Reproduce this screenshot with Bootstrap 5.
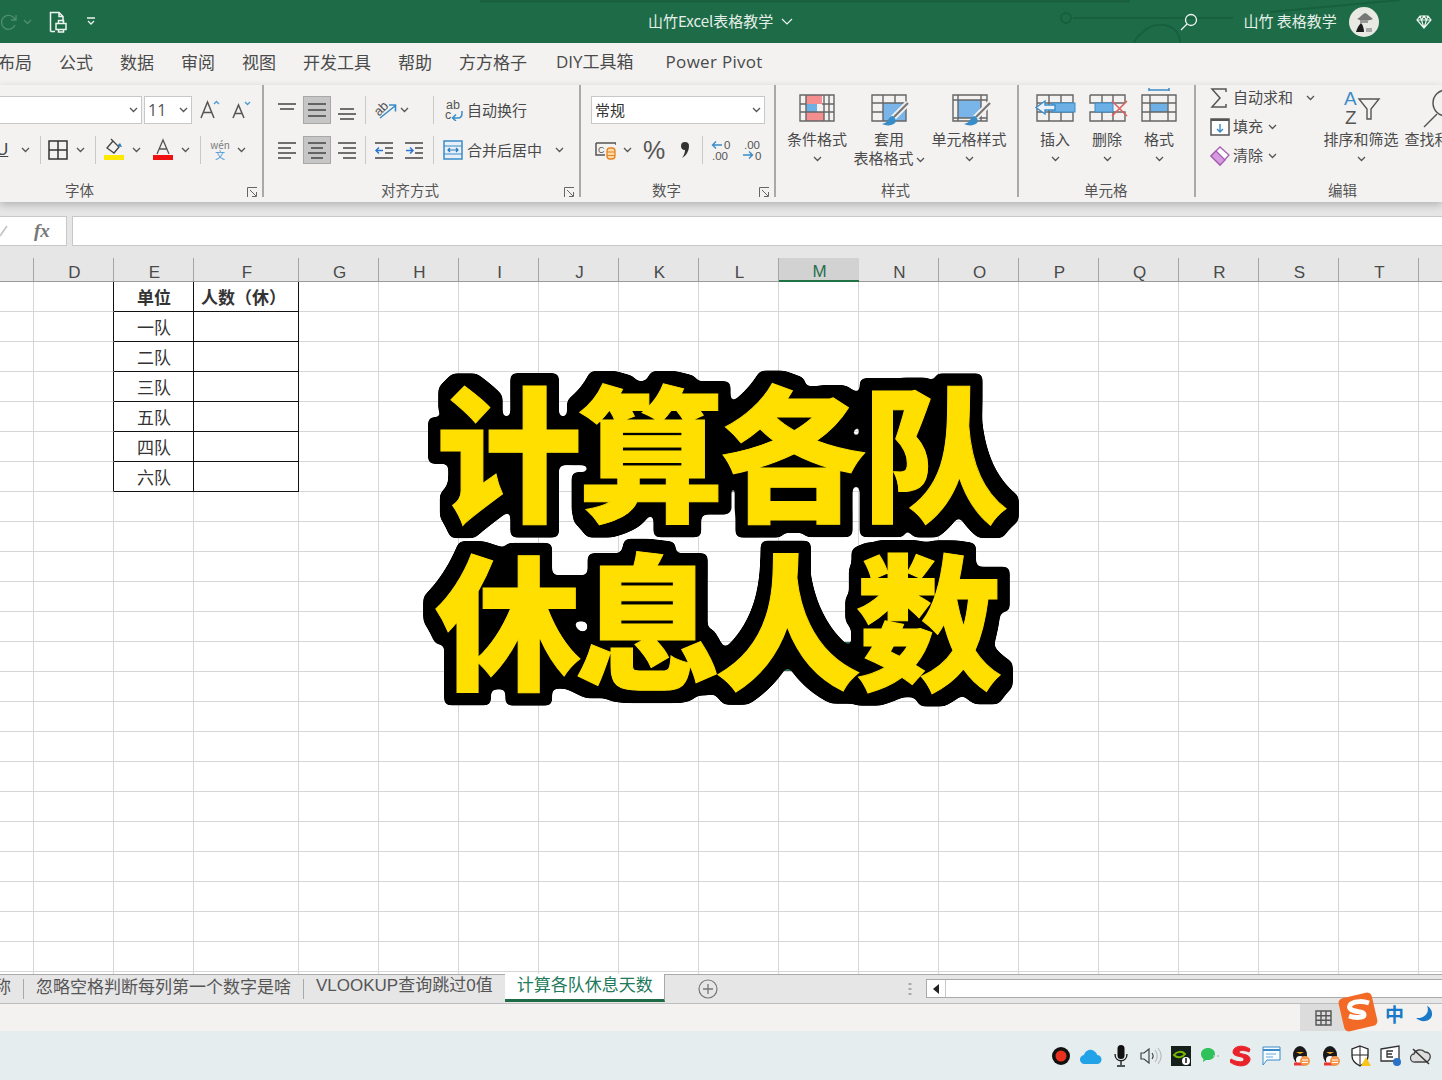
<!DOCTYPE html>
<html lang="zh-CN">
<head>
<meta charset="utf-8">
<title>山竹Excel表格教学</title>
<link href="https://cdn.jsdelivr.net/npm/bootstrap@5.3.0/dist/css/bootstrap.min.css" rel="stylesheet">
<style>
html,body{margin:0;height:100%;overflow:hidden;background:#f3f2f1}
body{font-family:"Noto Sans CJK SC","Liberation Sans",sans-serif;color:#444}
.xl-app{width:1442px;height:1080px;overflow:hidden;position:relative}
.ti-bar{height:43px;background:#1e6b47;color:#e4efe9;font-size:15px;position:relative;flex:none}
.ti-deco{position:absolute;left:0;top:0;pointer-events:none}
.ti-bar>*:not(.ti-deco){position:relative}
.tab-bar{height:42px;background:#f3f2f1;font-size:17px;gap:27px;color:#4a4a4a;flex:none;margin-left:-2px;padding-bottom:5px}
.tab-latin{font-family:"Open Sans","Noto Sans CJK SC",sans-serif;font-size:17px}
.tab-pp{letter-spacing:.3px}
.rb-bar{height:117px;background:#f3f2f1;box-shadow:0 3px 8px rgba(0,0,0,.22);position:relative;z-index:2;flex:none;font-size:15px;color:#4a4a4a}
.rb-grp{height:112px;border-right:2px solid #a9a9a9;flex:none;display:flex;flex-direction:column}
.g-font{width:264px}.g-alig{width:317px;padding-left:9px}.g-num{width:195px;padding-left:10px}.g-sty{width:243px;padding-left:11px}.g-cel{width:177px;padding-left:10px}.g-edt{width:300px;border-right:0}
.rb-row{display:flex;align-items:center;height:28px;flex:none;margin-top:11px}
.rb-row+.rb-row{margin-top:12px}
.rb-cap{margin-top:auto;height:20px;display:flex;align-items:center;line-height:20px;font-size:14.5px;color:#555;margin-bottom:-3px}
.rb-launch{margin-left:auto;margin-right:4px;margin-top:4px}
.rb-sep{width:1px;height:28px;background:#c9c9c9;flex:none}
.rb-in{height:28px;background:#fff;border:1px solid #c8c8c8;display:flex;align-items:center;justify-content:space-between;padding:0 3px 0 3px;flex:none}
.in-font{width:142px;border-left:0;justify-content:flex-end}
.in-size{width:48px;margin-left:2px;font-size:16px;color:#555;font-family:"Open Sans",sans-serif}
.in-num{width:174px;color:#333}
.rb-btn{width:28px;height:28px;display:flex;align-items:center;justify-content:center;flex:none;border:1px solid transparent}
.rb-btn+.rb-btn{margin-left:2px}
.rb-on{background:#c6c6c6;border-color:#a8a8a8}
.chv{width:14px;flex:none;display:flex;justify-content:center}
.u-mark{width:22px;font-family:"Liberation Sans",sans-serif;font-size:17px;text-decoration:underline;margin-left:-4px;color:#444;flex:none}
.wen-stack{width:22px;display:flex;flex-direction:column;align-items:center;line-height:10px;flex:none;color:#7b7b7b;font-size:10px}
.wen-stack b{font-weight:400;color:#4a9ad4;font-size:10px}
.big-col{display:flex;flex-direction:column;align-items:center;flex:none;line-height:19px;padding-top:9px;height:89px}
.big-col svg.mainic{margin-bottom:7px;flex:none;overflow:visible}
.big-col span{display:block;white-space:nowrap}
.bc60{width:60px}.bc74{width:74px;margin-left:5px}.bc76{width:76px;margin-left:5px}.bc52{width:52px}
.mag-ic{align-self:flex-start;margin-left:20px}
.edt-list{width:108px;margin-left:14px;margin-top:-2px;flex:none}
.edt-row{height:29px;display:flex;align-items:center}
.f-bar{height:45px;background:#e6e6e6;flex:none;padding-top:14px;gap:5px}
.f-box{height:30px;background:#fff;border:1px solid #c8c8c8;border-left:0}
.f-fx{width:67px;font-family:"Liberation Serif",serif;font-style:italic;font-weight:700;font-size:19px;color:#777;padding-left:0;line-height:26px;flex:none;display:flex;align-items:center}
.fx-lbl{margin-left:26px}
.f-in{flex:1;border-left:1px solid #c8c8c8;border-right:0}
.sh-wrap{height:727px;overflow:hidden;background:#fff;flex:none}
.xl-grid.table{width:1499px;table-layout:fixed;border-collapse:separate;border-spacing:0;margin:0}
.xl-grid.table>:not(caption)>*>*{padding:0 0 0 1px;border:0;border-right:1px solid #d6d6d6;border-bottom:1px solid #d6d6d6;height:30px;text-align:center;font-size:17px;font-weight:400;color:#333;background:transparent;box-shadow:none;line-height:29px}
.xl-grid.table>thead>tr>th{height:35px;background:linear-gradient(#a5a5a5,#a5a5a5) right bottom/1px 23px no-repeat #e6e6e6;border-right:0;border-bottom:1px solid #9a9a9a;font-family:"Liberation Sans",sans-serif;font-size:17px;line-height:16px;vertical-align:bottom;padding:0 0 0 1px;color:#4a4a4a}
.xl-grid.table>thead>tr>th.th-on{background:linear-gradient(#d2d2d2,#d2d2d2) left bottom/100% 22px no-repeat #e6e6e6;border-bottom:2px solid #217346;color:#2a6e52}
.cw-a{width:34px}.cw-n{width:80px}.cw-f{width:105px}
.xl-grid.table>tbody>tr>td.ink-r{border-right-color:#111}
.xl-grid.table>tbody>tr>td.ink-b{border-bottom-color:#111}
.xl-grid.table>tbody>tr>td.ink-hd{font-weight:700}
.xl-grid.table>tbody>tr>td.ink-lf{text-align:left;padding-left:7px}
.xl-grid.table>tbody>tr>td.cell-sel{box-shadow:inset 0 0 0 2px #2c6e58}
.s-bar{height:30px;background:#e6e6e6;border-top:1px solid #a9a9a9;border-bottom:1px solid #bdbdbd;font-size:17px;flex:none;color:#555;white-space:nowrap;line-height:24px}
.s-lbl{padding-bottom:6px}
.s-cut{margin-left:-6px}
.s-latin{font-family:"Liberation Sans","Noto Sans CJK SC",sans-serif}
.s-sep{width:1px;height:20px;background:#a9a9a9;flex:none;margin:0 12px;align-self:flex-start;margin-top:4px}
.s-tab{height:28px;background:#fff;color:#217a5a;padding:0 12px;border-bottom:3px solid #1e6b47;margin-top:-1px;margin-left:12px;border-right:1px solid #a9a9a9;line-height:19px;width:160px;align-self:flex-start}
.s-plus{margin-left:33px}.s-dots{margin-left:190px}
.s-scr{margin-left:14px;width:540px;height:19px;background:#fff;border:1px solid #a9a9a9;display:flex;flex:none;margin-top:-1px}
.s-scr i{display:flex;align-items:center;justify-content:center;width:19px;border-right:1px solid #c8c8c8}
.st-bar{height:27px;background:#f3f2f1;flex:none;position:relative;justify-content:flex-end}
.st-grid{width:50px;height:27px;background:#dcdcdc;margin-right:92px;padding-left:15px;display:flex;align-items:center}
.ime-pop{position:absolute;left:1337px;top:-12px;height:40px;display:flex;align-items:center;color:#1a7ac8;font-weight:700;font-size:19px}
.ime-han{margin-left:6px;margin-right:11px;line-height:40px;margin-top:3px}
.ime-moon{margin-top:3px}
.tk-bar{height:50px;background:#e6edef;flex:none;padding-left:1046px}
.tk-ic{width:30px;display:flex;justify-content:center;align-items:center;flex:none}
.cap-a{margin-left:65px}.cap-b{margin-left:108px}.cap-c{margin-left:61px}.cap-d{margin-left:94px}.cap-e{margin-left:55px}.cap-f{margin-left:132px}
.pct-txt{font-family:"Liberation Sans",sans-serif;font-size:25px;color:#555;line-height:28px;flex:none;width:21px;text-align:center}
.ml2{margin-left:2px}.ml3{margin-left:3px}.ml4{margin-left:4px}.ml5{margin-left:5px}.ml7{margin-left:7px}.ml8{margin-left:8px}.ml9{margin-left:9px}.ml10{margin-left:10px}.ml12{margin-left:12px}.ml16{margin-left:16px}.ml22{margin-left:22px}
.ti-m1b{margin-left:17px}.ti-m1c{margin-left:17px}.ti-m2{margin-left:552px}.ti-m3{margin-left:387px}.ti-m4{margin-left:45px}.ti-m5{margin-left:12px}.ti-m6{margin-left:37px}
.xl-over{position:absolute;left:400px;top:350px;z-index:5;pointer-events:none}
.xl-over text{font-family:"Noto Sans CJK SC",sans-serif;font-weight:900;font-size:146px;fill:#ffdf00;stroke:#ffdf00;stroke-width:1px;filter:url(#ink-edge)}
svg{display:block;flex:none}
</style>
</head>
<body>
<svg width="0" height="0" class="position-absolute">
<defs>
<symbol id="chev" viewBox="0 0 9 6"><path d="M1 1l3.500 3.500L8 1" fill="none" stroke="#555" stroke-width="1.300"/></symbol>
<symbol id="launch" viewBox="0 0 11 11"><path d="M.5 10V.5H10M3 3l6 6M5 9.500h4.500V5" fill="none" stroke="#666"/></symbol>
<g id="brush"><path d="M37 9L22 24" stroke="#f3f2f1" stroke-width="6"/><path d="M37 9L23 23" stroke="#777" stroke-width="2.200"/><path d="M22 22c-2 0-4 2-5 4-1 2-3 3-6 4 4 2 10 2 13-1 2-2 0-6-2-7z" fill="#3a8cc8"/></g>
<filter id="ink-edge" x="-10%" y="-20%" width="120%" height="140%" color-interpolation-filters="sRGB">
 <feMorphology in="SourceAlpha" operator="dilate" radius="12" result="fat"/>
 <feGaussianBlur in="fat" stdDeviation="3" result="soft"/>
 <feComponentTransfer in="soft" result="edge"><feFuncA type="linear" slope="12" intercept="-5"/></feComponentTransfer>
 <feFlood flood-color="#000"/>
 <feComposite in2="edge" operator="in" result="ink"/>
 <feMerge><feMergeNode in="ink"/><feMergeNode in="SourceGraphic"/></feMerge>
</filter>
</defs>
</svg>
<div class="xl-app d-flex flex-column">

<!-- title bar -->
<div class="ti-bar d-flex align-items-center">
<svg class="ti-deco" width="1442" height="43"><path d="M480 1h650" stroke="#185c3c" stroke-width="3" opacity=".7"/><path d="M1073 18h160M1270 12l130-12M1180 43c0-18-22-24-36-12s-8 12-8 12" stroke="#17603d" stroke-width="2" fill="none"/><circle cx="1066" cy="18" r="5" fill="none" stroke="#17603d" stroke-width="2"/></svg>
<svg width="18" height="18" viewBox="0 0 18 18"><path d="M15 12a7 7 0 1 1-2-8l3 3M16 2v5h-5" fill="none" stroke="#4d8f70" stroke-width="1.300"/></svg>
<svg class="ml5" width="9" height="6" viewBox="0 0 9 6"><path d="M1 1l3.500 3.500L8 1" fill="none" stroke="#4d8f70" stroke-width="1.300"/></svg>
<svg class="ti-m1b" width="20" height="22" viewBox="0 0 20 22"><path d="M1.500 20.500V1.500H10l4 4v5M10 1.500v4h4M6 20.500H1.500" fill="none" stroke="#eef5f1" stroke-width="1.500"/><path d="M7 12.500h10v6H7zM9.500 12.500v-3h5v3M9.500 18.500v2.500h5v-2.500" fill="none" stroke="#eef5f1" stroke-width="1.500"/></svg>
<svg class="ti-m1c" width="10" height="10" viewBox="0 0 10 10"><path d="M1 1h8M2 4l3 3 3-3" fill="none" stroke="#eef5f1" stroke-width="1.300"/></svg>
<span class="ti-m2 text-nowrap">山竹Excel表格教学</span>
<svg class="ml8" width="12" height="7" viewBox="0 0 12 7"><path d="M1 1l5 5 5-5" fill="none" stroke="#eef5f1" stroke-width="1.200"/></svg>
<svg class="ti-m3" width="18" height="18" viewBox="0 0 18 18"><circle cx="11" cy="7" r="5.500" fill="none" stroke="#eef5f1" stroke-width="1.300"/><path d="M7 11l-6 6" stroke="#eef5f1" stroke-width="1.300"/></svg>
<span class="ti-m4 text-nowrap">山竹 表格教学</span>
<svg class="ti-m5" width="30" height="30" viewBox="0 0 30 30"><circle cx="15" cy="15" r="15" fill="#e9e9e4"/><path d="M8 12c3-1 5-5 8-6 3 1 5 4 8 6-5 2-11 2-16 0z" fill="#767676"/><path d="M11 13h8v3h-8z" fill="#9a9a9a"/><path d="M7 25c1-4 3-7 5-9 2 2 3 6 3 9z" fill="#1c1c1c"/><path d="M17 21h6v4h-6z" fill="#a8a8a8"/></svg>
<svg class="ti-m6" width="16" height="14" viewBox="0 0 16 14"><path d="M4 1h8l3 4-7 8-7-8zM1 5h14M5.500 5L8 13l2.500-8M4 1l1.500 4L8 1l2.500 4L12 1" fill="none" stroke="#eef5f1" stroke-width="1.200"/></svg>
</div>

<!-- ribbon tabs -->
<div class="tab-bar d-flex align-items-center text-nowrap">
<span>布局</span><span>公式</span><span>数据</span><span>审阅</span><span>视图</span><span>开发工具</span><span>帮助</span><span>方方格子</span><span class="tab-latin ml2">DIY工具箱</span><span class="tab-latin tab-pp ml5">Power Pivot</span>
</div>

<!-- ribbon -->
<div class="rb-bar d-flex overflow-hidden">
 <div class="rb-grp g-font">
  <div class="rb-row">
   <div class="rb-in in-font"><svg width="9" height="6"><use href="#chev"/></svg></div>
   <div class="rb-in in-size">11<svg width="9" height="6"><use href="#chev"/></svg></div>
   <svg class="ml8" width="20" height="22" viewBox="0 0 20 22"><path d="M1 19L7.500 3 14 19M3.500 13.500h8" fill="none" stroke="#555" stroke-width="1.500"/><path d="M14 5l2.500-2.500L19 5" fill="none" stroke="#4a9ad4" stroke-width="1.300"/></svg>
   <svg class="ml12" width="20" height="22" viewBox="0 0 20 22"><path d="M1 19L6.500 6 12 19M3 14.500h7" fill="none" stroke="#555" stroke-width="1.500"/><path d="M13 3l2.500 2.500L18 3" fill="none" stroke="#4a9ad4" stroke-width="1.300"/></svg>
  </div>
  <div class="rb-row">
   <span class="u-mark">U</span><span class="chv"><svg width="9" height="6"><use href="#chev"/></svg></span>
   <div class="rb-sep ml8"></div>
   <svg class="ml7" width="20" height="20" viewBox="0 0 20 20"><path d="M1 1h18v18H1zM10 1v18M1 10h18" fill="none" stroke="#333" stroke-width="1.500"/></svg>
   <span class="chv ml5"><svg width="9" height="6"><use href="#chev"/></svg></span>
   <div class="rb-sep ml8"></div>
   <svg class="ml8" width="22" height="24" viewBox="0 0 22 24"><path d="M3 10l6-7 6 6-5 6zM7 1l4 4" fill="none" stroke="#444" stroke-width="1.300"/><path d="M13 8l3-3 2 4z" fill="#2a78b8"/><rect x="0" y="17" width="20" height="5" fill="#ffe800"/></svg>
   <span class="chv ml3"><svg width="9" height="6"><use href="#chev"/></svg></span>
   <svg class="ml10" width="22" height="24" viewBox="0 0 22 24"><path d="M4 16L10 2l6 14M6 11h8" fill="none" stroke="#555" stroke-width="1.300"/><rect x="0" y="17" width="20" height="5" fill="#f01010"/></svg>
   <span class="chv ml3"><svg width="9" height="6"><use href="#chev"/></svg></span>
   <div class="rb-sep ml8"></div>
   <div class="wen-stack ml8">wén<b>文</b></div>
   <span class="chv ml3"><svg width="9" height="6"><use href="#chev"/></svg></span>
  </div>
  <div class="rb-cap"><span class="cap-a">字体</span><svg class="rb-launch" width="11" height="11"><use href="#launch"/></svg></div>
 </div>

 <div class="rb-grp g-alig">
  <div class="rb-row">
   <div class="rb-btn"><svg width="20" height="20" viewBox="0 0 20 20"><path d="M1 4h18M3 9h14" stroke="#444" stroke-width="1.300"/></svg></div>
   <div class="rb-btn rb-on"><svg width="20" height="16" viewBox="0 0 20 16"><path d="M1 2h18M1 8h18M1 14h18" stroke="#444" stroke-width="1.300"/></svg></div>
   <div class="rb-btn"><svg width="20" height="20" viewBox="0 0 20 20"><path d="M3 9h14M1 14h18M3 19h14" stroke="#444" stroke-width="1.300"/></svg></div>
   <div class="rb-sep ml4"></div>
   <svg class="ml8" width="23" height="22" viewBox="0 0 23 22"><path d="M6 19L21 7M15 6h6.500v6.500" fill="none" stroke="#3a8cc8" stroke-width="1.600"/><text x="0" y="14" font-size="13" fill="#555" font-family="Liberation Sans" transform="rotate(-45 7 10)">ab</text></svg>
   <span class="chv"><svg width="9" height="6"><use href="#chev"/></svg></span>
   <div class="rb-sep ml22"></div>
   <svg class="ml10" width="20" height="22" viewBox="0 0 20 22"><text x="2" y="10" font-size="12.500" fill="#555" font-family="Liberation Sans">ab</text><text x="1" y="20" font-size="12.500" fill="#555" font-family="Liberation Sans">c</text><path d="M18 12v2q0 5-4 5H9M12 15.500L8.500 19l3.500 3" fill="none" stroke="#3a8cc8" stroke-width="1.500"/></svg>
   <span class="ml3 text-nowrap">自动换行</span>
  </div>
  <div class="rb-row">
   <div class="rb-btn"><svg width="20" height="18" viewBox="0 0 20 18"><path d="M1 2h18M1 7h13M1 12h18M1 17h13" stroke="#444" stroke-width="1.300"/></svg></div>
   <div class="rb-btn rb-on"><svg width="20" height="18" viewBox="0 0 20 18"><path d="M1 2h18M4 7h12M1 12h18M4 17h12" stroke="#444" stroke-width="1.300"/></svg></div>
   <div class="rb-btn"><svg width="20" height="18" viewBox="0 0 20 18"><path d="M1 2h18M6 7h13M1 12h18M6 17h13" stroke="#444" stroke-width="1.300"/></svg></div>
   <div class="rb-sep ml4"></div>
   <svg class="ml8" width="20" height="18" viewBox="0 0 20 18"><path d="M1 2h18M11 7h8M11 12h8M1 17h18" stroke="#444" stroke-width="1.300"/><path d="M9 9.500H2M5 6.500l-3 3 3 3" fill="none" stroke="#2a78d0" stroke-width="1.500"/></svg>
   <svg class="ml10" width="20" height="18" viewBox="0 0 20 18"><path d="M1 2h18M11 7h8M11 12h8M1 17h18" stroke="#444" stroke-width="1.300"/><path d="M2 9.500h7M6 6.500l3 3-3 3" fill="none" stroke="#2a78d0" stroke-width="1.500"/></svg>
   <div class="rb-sep ml9"></div>
   <svg class="ml9" width="20" height="20" viewBox="0 0 20 20"><path d="M1 1h18v18H1z" fill="#e7f0f8" stroke="#3a8cc8" stroke-width="1.500"/><path d="M1 6h18M1 14h18" stroke="#3a8cc8"/><path d="M5 10h10M7 8l-2 2 2 2M13 8l2 2-2 2" fill="none" stroke="#2a78b8" stroke-width="1.200"/></svg>
   <span class="ml4 text-nowrap">合并后居中</span>
   <span class="chv ml10"><svg width="9" height="6"><use href="#chev"/></svg></span>
  </div>
  <div class="rb-cap"><span class="cap-b">对齐方式</span><svg class="rb-launch" width="11" height="11"><use href="#launch"/></svg></div>
 </div>

 <div class="rb-grp g-num">
  <div class="rb-row"><div class="rb-in in-num">常规<svg width="9" height="6"><use href="#chev"/></svg></div></div>
  <div class="rb-row">
   <svg class="ml4" width="21" height="20" viewBox="0 0 21 20"><path d="M1 3h20v2M1 3v12h9" fill="none" stroke="#555" stroke-width="1.500"/><text x="3" y="13" font-size="9" fill="#555" font-family="Liberation Sans">C</text><rect x="12" y="8" width="8" height="11" rx="3" fill="#fbdca8" stroke="#e8821e" stroke-width="1.300"/><path d="M12 12h8M12 15.500h8" stroke="#e8821e"/></svg>
   <span class="chv ml4"><svg width="9" height="6"><use href="#chev"/></svg></span>
   <span class="pct-txt ml9">%</span>
   <svg class="ml16" width="10" height="18" viewBox="0 0 10 18"><path d="M1 5a4 4 0 1 1 8 0c0 5-3 10-7 12 2-3 3-5 3-8-3 0-4-2-4-4z" fill="#333"/></svg>
   <div class="rb-sep ml12"></div>
   <svg class="ml8" width="21" height="22" viewBox="0 0 21 22"><path d="M11 6H2M5 2.500L1.500 6 5 9.500" fill="none" stroke="#3a8cc8" stroke-width="1.400"/><text x="13" y="10" font-size="11.500" fill="#555" font-family="Liberation Sans">0</text><text x="1" y="21" font-size="11.500" fill="#555" font-family="Liberation Sans">.00</text></svg>
   <svg class="ml10" width="21" height="22" viewBox="0 0 21 22"><text x="2" y="10" font-size="11.500" fill="#555" font-family="Liberation Sans">.00</text><path d="M1 16h9M7 12.500l3.500 3.500L7 19.500" fill="none" stroke="#3a8cc8" stroke-width="1.400"/><text x="13" y="21" font-size="11.500" fill="#555" font-family="Liberation Sans">0</text></svg>
  </div>
  <div class="rb-cap"><span class="cap-c">数字</span><svg class="rb-launch" width="11" height="11"><use href="#launch"/></svg></div>
 </div>

 <div class="rb-grp g-sty">
  <div class="d-flex">
   <div class="big-col bc60">
    <svg class="mainic" width="36" height="28" viewBox="0 0 36 28"><rect x="7" y="1" width="16" height="9" fill="#f58f8f"/><rect x="7" y="10" width="11" height="8" fill="#6cb0e6"/><rect x="7" y="18" width="18" height="9" fill="#f58f8f"/><path d="M1 1h34v26H1zM1 10h6M23 10h12M1 18h34M7 1v26M25 1v26M30 1v26" fill="none" stroke="#666" stroke-width="1.400"/></svg>
    <span>条件格式</span><svg width="9" height="6" class="mt-2"><use href="#chev"/></svg>
   </div>
   <div class="big-col bc74">
    <svg class="mainic" width="36" height="28" viewBox="0 0 36 28"><rect x="12" y="9" width="23" height="18" fill="#7ab5ea"/><path d="M1 1h34v26H1zM1 9h34M1 18h11M12 1v26M24 1v8" fill="none" stroke="#666" stroke-width="1.400"/><use href="#brush"/></svg>
    <span class="text-center">套用<br>表格格式<svg width="9" height="6" class="d-inline ml2"><use href="#chev"/></svg></span>
   </div>
   <div class="big-col bc76">
    <svg class="mainic" width="36" height="28" viewBox="0 0 36 28"><rect x="7" y="6" width="23" height="18" fill="#7ab5ea"/><path d="M2 1h34v26H2zM2 6h34M2 24h34M7 1v26M30 1v26" fill="none" stroke="#666" stroke-width="1.400"/><use href="#brush" x="2"/></svg>
    <span>单元格样式</span><svg width="9" height="6" class="mt-2"><use href="#chev"/></svg>
   </div>
  </div>
  <div class="rb-cap"><span class="cap-d">样式</span></div>
 </div>

 <div class="rb-grp g-cel">
  <div class="d-flex">
   <div class="big-col bc52">
    <svg class="mainic" width="40" height="28" viewBox="0 0 40 28"><path d="M2 1h36v26H2zM14 1v26M26 1v26M2 9h36M2 18h36" fill="none" stroke="#666" stroke-width="1.400"/><rect x="17" y="9" width="23" height="9" fill="#6cb0e6" stroke="#3a8cc8"/><path d="M1 13.500L10 7v4h10v5H10v4z" fill="#eaf3fb" stroke="#3a8cc8" stroke-width="1.400"/></svg>
    <span>插入</span><svg width="9" height="6" class="mt-2"><use href="#chev"/></svg>
   </div>
   <div class="big-col bc52">
    <svg class="mainic" width="40" height="28" viewBox="0 0 40 28"><path d="M3 1h35v8M3 1v8h35M3 18v9h35v-9zM15 1v8M26 1v8M15 18v9M26 18v9" fill="none" stroke="#666" stroke-width="1.400"/><rect x="8" y="9" width="18" height="9" fill="#6cb0e6" stroke="#3a8cc8"/><path d="M25 7l15 15M40 7L25 22" stroke="#e06060" stroke-width="1.600"/></svg>
    <span>删除</span><svg width="9" height="6" class="mt-2"><use href="#chev"/></svg>
   </div>
   <div class="big-col bc52">
    <svg class="mainic" width="36" height="28" viewBox="0 0 36 28"><path d="M8 -4h20M8 -6v3M28 -6v3" stroke="#3a8cc8" stroke-width="1.500" fill="none"/><rect x="9" y="9" width="18" height="9" fill="#6cb0e6"/><path d="M1 1h34v26H1zM1 9h34M1 18h34M9 1v26M27 1v26" fill="none" stroke="#666" stroke-width="1.400"/></svg>
    <span>格式</span><svg width="9" height="6" class="mt-2"><use href="#chev"/></svg>
   </div>
  </div>
  <div class="rb-cap"><span class="cap-e">单元格</span></div>
 </div>

 <div class="rb-grp g-edt">
  <div class="d-flex">
   <div class="edt-list">
    <div class="edt-row"><svg width="18" height="20" viewBox="0 0 18 20"><path d="M16 4V1H2l8 9-8 9h14v-3" fill="none" stroke="#555" stroke-width="1.500"/></svg><span class="ml5">自动求和</span><span class="chv ml10"><svg width="9" height="6"><use href="#chev"/></svg></span></div>
    <div class="edt-row"><svg width="20" height="18" viewBox="0 0 20 18"><path d="M1 1h18v16H1z" fill="#fff" stroke="#555" stroke-width="1.500"/><path d="M1 2h18" stroke="#555" stroke-width="2"/><path d="M10 6v8M7 11l3 3 3-3" fill="none" stroke="#3a8cc8" stroke-width="1.400"/></svg><span class="ml3">填充</span><span class="chv ml2"><svg width="9" height="6"><use href="#chev"/></svg></span></div>
    <div class="edt-row"><svg width="20" height="20" viewBox="0 0 20 20"><path d="M1 10l9-9 9 8-9 10z" fill="#fff" stroke="#a55fb0" stroke-width="1.300"/><path d="M1 10l5-5 9 9-5 5z" fill="#d79ae0" stroke="#a55fb0" stroke-width="1.300"/></svg><span class="ml3">清除</span><span class="chv ml2"><svg width="9" height="6"><use href="#chev"/></svg></span></div>
   </div>
   <div class="big-col bc76">
    <svg class="mainic" width="38" height="28" viewBox="0 0 38 28"><text x="2" y="11" font-size="19" fill="#3a8cc8" font-family="Liberation Sans">A</text><text x="3" y="30" font-size="19" fill="#555" font-family="Liberation Sans">Z</text><path d="M17 5h20l-8 10v10h-4V15z" fill="none" stroke="#555" stroke-width="1.400"/></svg>
    <span>排序和筛选</span><svg width="9" height="6" class="mt-2"><use href="#chev"/></svg>
   </div>
   <div class="big-col bc76">
    <svg class="mainic mag-ic" width="36" height="28" viewBox="0 0 36 28"><circle cx="22" cy="9" r="13" fill="none" stroke="#555" stroke-width="1.500"/><path d="M13 20L0 33" stroke="#555" stroke-width="1.500"/></svg>
    <span>查找和选择</span>
   </div>
  </div>
  <div class="rb-cap"><span class="cap-f">编辑</span></div>
 </div>
</div>

<!-- formula bar -->
<div class="f-bar d-flex">
 <div class="f-box f-fx"><svg width="8" height="12" viewBox="0 0 8 12"><path d="M0 11L7 1" stroke="#c4c4c4" stroke-width="1.600"/></svg><span class="fx-lbl">fx</span></div>
 <div class="f-box f-in"></div>
</div>

<!-- sheet -->
<div class="sh-wrap">
<table class="table xl-grid">
<colgroup><col class="cw-a"><col class="cw-n"><col class="cw-n"><col class="cw-f"><col class="cw-n"><col class="cw-n"><col class="cw-n"><col class="cw-n"><col class="cw-n"><col class="cw-n"><col class="cw-n"><col class="cw-n"><col class="cw-n"><col class="cw-n"><col class="cw-n"><col class="cw-n"><col class="cw-n"><col class="cw-n"><col class="cw-n"></colgroup>
<thead><tr><th></th><th>D</th><th>E</th><th>F</th><th>G</th><th>H</th><th>I</th><th>J</th><th>K</th><th>L</th><th class="th-on">M</th><th>N</th><th>O</th><th>P</th><th>Q</th><th>R</th><th>S</th><th>T</th><th>U</th></tr></thead>
<tbody>
<tr><td></td><td class="ink-r"></td><td class="ink-r ink-b ink-hd">单位</td><td class="ink-r ink-b ink-hd ink-lf">人数（休）</td><td></td><td></td><td></td><td></td><td></td><td></td><td></td><td></td><td></td><td></td><td></td><td></td><td></td><td></td><td></td></tr>
<tr><td></td><td class="ink-r"></td><td class="ink-r ink-b">一队</td><td class="ink-r ink-b"></td><td></td><td></td><td></td><td></td><td></td><td></td><td></td><td></td><td></td><td></td><td></td><td></td><td></td><td></td><td></td></tr>
<tr><td></td><td class="ink-r"></td><td class="ink-r ink-b">二队</td><td class="ink-r ink-b"></td><td></td><td></td><td></td><td></td><td></td><td></td><td></td><td></td><td></td><td></td><td></td><td></td><td></td><td></td><td></td></tr>
<tr><td></td><td class="ink-r"></td><td class="ink-r ink-b">三队</td><td class="ink-r ink-b"></td><td></td><td></td><td></td><td></td><td></td><td></td><td></td><td></td><td></td><td></td><td></td><td></td><td></td><td></td><td></td></tr>
<tr><td></td><td class="ink-r"></td><td class="ink-r ink-b">五队</td><td class="ink-r ink-b"></td><td></td><td></td><td></td><td></td><td></td><td></td><td></td><td></td><td></td><td></td><td></td><td></td><td></td><td></td><td></td></tr>
<tr><td></td><td class="ink-r"></td><td class="ink-r ink-b">四队</td><td class="ink-r ink-b"></td><td></td><td></td><td></td><td></td><td></td><td></td><td></td><td></td><td></td><td></td><td></td><td></td><td></td><td></td><td></td></tr>
<tr><td></td><td class="ink-r"></td><td class="ink-r ink-b">六队</td><td class="ink-r ink-b"></td><td></td><td></td><td></td><td></td><td></td><td></td><td></td><td></td><td></td><td></td><td></td><td></td><td></td><td></td><td></td></tr>
<tr><td></td><td></td><td></td><td></td><td></td><td></td><td></td><td></td><td></td><td></td><td></td><td></td><td></td><td></td><td></td><td></td><td></td><td></td><td></td></tr>
<tr><td></td><td></td><td></td><td></td><td></td><td></td><td></td><td></td><td></td><td></td><td></td><td></td><td></td><td></td><td></td><td></td><td></td><td></td><td></td></tr>
<tr><td></td><td></td><td></td><td></td><td></td><td></td><td></td><td></td><td></td><td></td><td></td><td></td><td></td><td></td><td></td><td></td><td></td><td></td><td></td></tr>
<tr><td></td><td></td><td></td><td></td><td></td><td></td><td></td><td></td><td></td><td></td><td></td><td></td><td></td><td></td><td></td><td></td><td></td><td></td><td></td></tr>
<tr><td></td><td></td><td></td><td></td><td></td><td></td><td></td><td></td><td></td><td></td><td></td><td></td><td></td><td></td><td></td><td></td><td></td><td></td><td></td></tr>
<tr><td></td><td></td><td></td><td></td><td></td><td></td><td></td><td></td><td></td><td></td><td class="cell-sel"></td><td></td><td></td><td></td><td></td><td></td><td></td><td></td><td></td></tr>
<tr><td></td><td></td><td></td><td></td><td></td><td></td><td></td><td></td><td></td><td></td><td></td><td></td><td></td><td></td><td></td><td></td><td></td><td></td><td></td></tr>
<tr><td></td><td></td><td></td><td></td><td></td><td></td><td></td><td></td><td></td><td></td><td></td><td></td><td></td><td></td><td></td><td></td><td></td><td></td><td></td></tr>
<tr><td></td><td></td><td></td><td></td><td></td><td></td><td></td><td></td><td></td><td></td><td></td><td></td><td></td><td></td><td></td><td></td><td></td><td></td><td></td></tr>
<tr><td></td><td></td><td></td><td></td><td></td><td></td><td></td><td></td><td></td><td></td><td></td><td></td><td></td><td></td><td></td><td></td><td></td><td></td><td></td></tr>
<tr><td></td><td></td><td></td><td></td><td></td><td></td><td></td><td></td><td></td><td></td><td></td><td></td><td></td><td></td><td></td><td></td><td></td><td></td><td></td></tr>
<tr><td></td><td></td><td></td><td></td><td></td><td></td><td></td><td></td><td></td><td></td><td></td><td></td><td></td><td></td><td></td><td></td><td></td><td></td><td></td></tr>
<tr><td></td><td></td><td></td><td></td><td></td><td></td><td></td><td></td><td></td><td></td><td></td><td></td><td></td><td></td><td></td><td></td><td></td><td></td><td></td></tr>
<tr><td></td><td></td><td></td><td></td><td></td><td></td><td></td><td></td><td></td><td></td><td></td><td></td><td></td><td></td><td></td><td></td><td></td><td></td><td></td></tr>
<tr><td></td><td></td><td></td><td></td><td></td><td></td><td></td><td></td><td></td><td></td><td></td><td></td><td></td><td></td><td></td><td></td><td></td><td></td><td></td></tr>
<tr><td></td><td></td><td></td><td></td><td></td><td></td><td></td><td></td><td></td><td></td><td></td><td></td><td></td><td></td><td></td><td></td><td></td><td></td><td></td></tr>
<tr><td></td><td></td><td></td><td></td><td></td><td></td><td></td><td></td><td></td><td></td><td></td><td></td><td></td><td></td><td></td><td></td><td></td><td></td><td></td></tr>
</tbody>
</table>
</div>

<!-- sheet tabs -->
<div class="s-bar d-flex align-items-center">
 <span class="s-cut s-lbl">称</span>
 <div class="s-sep"></div><span class="s-lbl">忽略空格判断每列第一个数字是啥</span>
 <div class="s-sep"></div><span class="s-latin s-lbl">VLOOKUP查询跳过0值</span>
 <span class="s-tab">计算各队休息天数</span>
 <svg class="s-plus" width="20" height="20" viewBox="0 0 20 20"><circle cx="10" cy="10" r="9" fill="none" stroke="#777" stroke-width="1.200"/><path d="M5 10h10M10 5v10" stroke="#777" stroke-width="1.300"/></svg>
 <svg class="s-dots" width="4" height="14" viewBox="0 0 4 14"><path d="M2 1v2M2 6v2M2 11v2" stroke="#aaa" stroke-width="3"/></svg>
 <div class="s-scr"><i><svg width="6" height="10" viewBox="0 0 6 10"><path d="M6 0v10L0 5z" fill="#222"/></svg></i></div>
</div>

<!-- status bar -->
<div class="st-bar d-flex">
 <div class="st-grid"><svg width="17" height="16" viewBox="0 0 17 16"><path d="M1 1h15v14H1zM6 1v14M11 1v14M1 5.700h15M1 10.300h15" fill="none" stroke="#555" stroke-width="1.400"/></svg></div>
 <div class="ime-pop">
  <svg width="42" height="40" viewBox="0 0 42 40"><rect x="4" y="3" width="34" height="34" rx="5" fill="#f26a25" transform="rotate(-13 21 20)"/><path d="M32 11c-6-2-14-2-18 1-3 3-1 6 4 7 4 1 9 1 9 4s-9 3-15 1" fill="none" stroke="#fff" stroke-width="5"/></svg>
  <span class="ime-han">中</span>
  <svg class="ime-moon" width="18" height="18" viewBox="0 0 18 18"><path d="M12 1c3 6-2 13-11 12 5 5 15 4 16-3 .5-4-2-8-5-9z" fill="#1a7ac8"/></svg>
 </div>
</div>

<!-- taskbar -->
<div class="tk-bar d-flex align-items-center">
 <span class="tk-ic"><svg width="18" height="18" viewBox="0 0 18 18"><circle cx="9" cy="9" r="9" fill="#111"/><circle cx="9" cy="9" r="5.500" fill="#e8321f"/></svg></span>
 <span class="tk-ic"><svg width="22" height="16" viewBox="0 0 22 16"><path d="M5 16a4.500 4.500 0 0 1-1-9c1-4 6-7 10-4 2 1 3 3 3 4a4.500 4.500 0 0 1 0 9z" fill="#22a3e8"/></svg></span>
 <span class="tk-ic"><svg width="14" height="22" viewBox="0 0 14 22"><rect x="3.500" y="0" width="7" height="14" rx="3.500" fill="#111"/><path d="M1 9c0 9 12 9 12 0M7 16v4M3 21h8" fill="none" stroke="#222" stroke-width="1.400"/></svg></span>
 <span class="tk-ic"><svg width="22" height="20" viewBox="0 0 22 20"><path d="M1 7h3l5-4v14l-5-4H1z" fill="none" stroke="#444" stroke-width="1.200"/><path d="M12 7c1.500 2 1.500 4 0 6" fill="none" stroke="#444" stroke-width="1.200"/><path d="M15 4c3 4 3 8 0 12M18 2c4 5 4 11 0 16" fill="none" stroke="#bbb" stroke-width="1.200"/></svg></span>
 <span class="tk-ic"><svg width="20" height="20" viewBox="0 0 20 20"><rect width="20" height="20" fill="#15201a"/><path d="M3 9c3-4 8-4 11-1-2 3-7 5-11 1z" fill="none" stroke="#76b900" stroke-width="2"/><circle cx="15" cy="15" r="4" fill="#fff"/><path d="M15 12v5" stroke="#111" stroke-width="1.500"/></svg></span>
 <span class="tk-ic"><svg width="20" height="16" viewBox="0 0 20 16"><path d="M7 0c4 0 7 2.500 7 6s-3 6-7 6H5l-3 2 .5-3C1 10 0 8 0 6c0-3.500 3-6 7-6z" fill="#2fc25b"/><circle cx="17" cy="8" r="1" fill="#bbb"/><circle cx="13" cy="8" r="1" fill="#bbb"/></svg></span>
 <span class="tk-ic"><svg width="22" height="22" viewBox="0 0 22 22"><path d="M20 4C13-1 3 1 3 7c0 6 12 3 11 8-1 3-8 2-13-1l-1 3c6 5 18 6 20-2 1-7-11-5-11-8 0-2 6-2 10 0z" fill="#e8242a" stroke="#e8242a"/></svg></span>
 <span class="tk-ic"><svg width="19" height="20" viewBox="0 0 19 20"><path d="M1 1h17v13H5l-4 5z" fill="#f6fbff" stroke="#3a8cc8"/><path d="M1 4h17" stroke="#3a8cc8" stroke-width="2"/><path d="M4 8h10M4 11h7" stroke="#6aa8d8"/></svg></span>
 <span class="tk-ic"><svg width="18" height="22" viewBox="0 0 18 22"><ellipse cx="8" cy="10" rx="7" ry="9" fill="#191919"/><ellipse cx="8" cy="15" rx="4" ry="4" fill="#fff"/><path d="M4 7h8l-4 2z" fill="#f5a623"/><path d="M2 19h10" stroke="#e33" stroke-width="3"/><circle cx="13" cy="16" r="5" fill="#f5974a"/><path d="M10 15h6M10 17.500h6" stroke="#fff"/></svg></span>
 <span class="tk-ic"><svg width="18" height="22" viewBox="0 0 18 22"><ellipse cx="8" cy="10" rx="7" ry="9" fill="#191919"/><ellipse cx="8" cy="15" rx="4" ry="4" fill="#fff"/><path d="M4 7h8l-4 2z" fill="#f5a623"/><path d="M2 19h10" stroke="#e33" stroke-width="3"/><circle cx="13" cy="16" r="5" fill="#f5974a"/><path d="M10 15h6M10 17.500h6" stroke="#fff"/></svg></span>
 <span class="tk-ic"><svg width="22" height="22" viewBox="0 0 22 22"><path d="M10 1l8 3v7c0 5-4 8-8 10-4-2-8-5-8-10V4z" fill="#fff" stroke="#222" stroke-width="1.300"/><path d="M10 1v20M2 10h16" stroke="#222"/><path d="M16 12l5 9H11z" fill="#f8c51c"/></svg></span>
 <span class="tk-ic"><svg width="22" height="22" viewBox="0 0 22 22"><path d="M1 4l18-3v15H1z" fill="#fff" stroke="#333" stroke-width="1.300"/><path d="M13 6H7v6h6M7 9h5" fill="none" stroke="#333" stroke-width="1.300"/><circle cx="17" cy="17" r="4" fill="#2a72c8"/></svg></span>
 <span class="tk-ic"><svg width="22" height="20" viewBox="0 0 22 20"><path d="M5 16a4 4 0 0 1-1-8c1-4 7-6 11-2 4 0 6 3 5 6-1 3-3 4-5 4z" fill="#ddd" stroke="#444" stroke-width="1.300"/><path d="M3 3l16 15" stroke="#333" stroke-width="1.500"/></svg></span>
</div>

<!-- overlay headline -->
<svg class="xl-over" width="640" height="380" viewBox="0 0 640 380">
 <text x="36 178 320 462" y="160">计算各队</text>
 <text x="35 175 315 456" y="328">休息人数</text>
</svg>
</div>
</body>
</html>
